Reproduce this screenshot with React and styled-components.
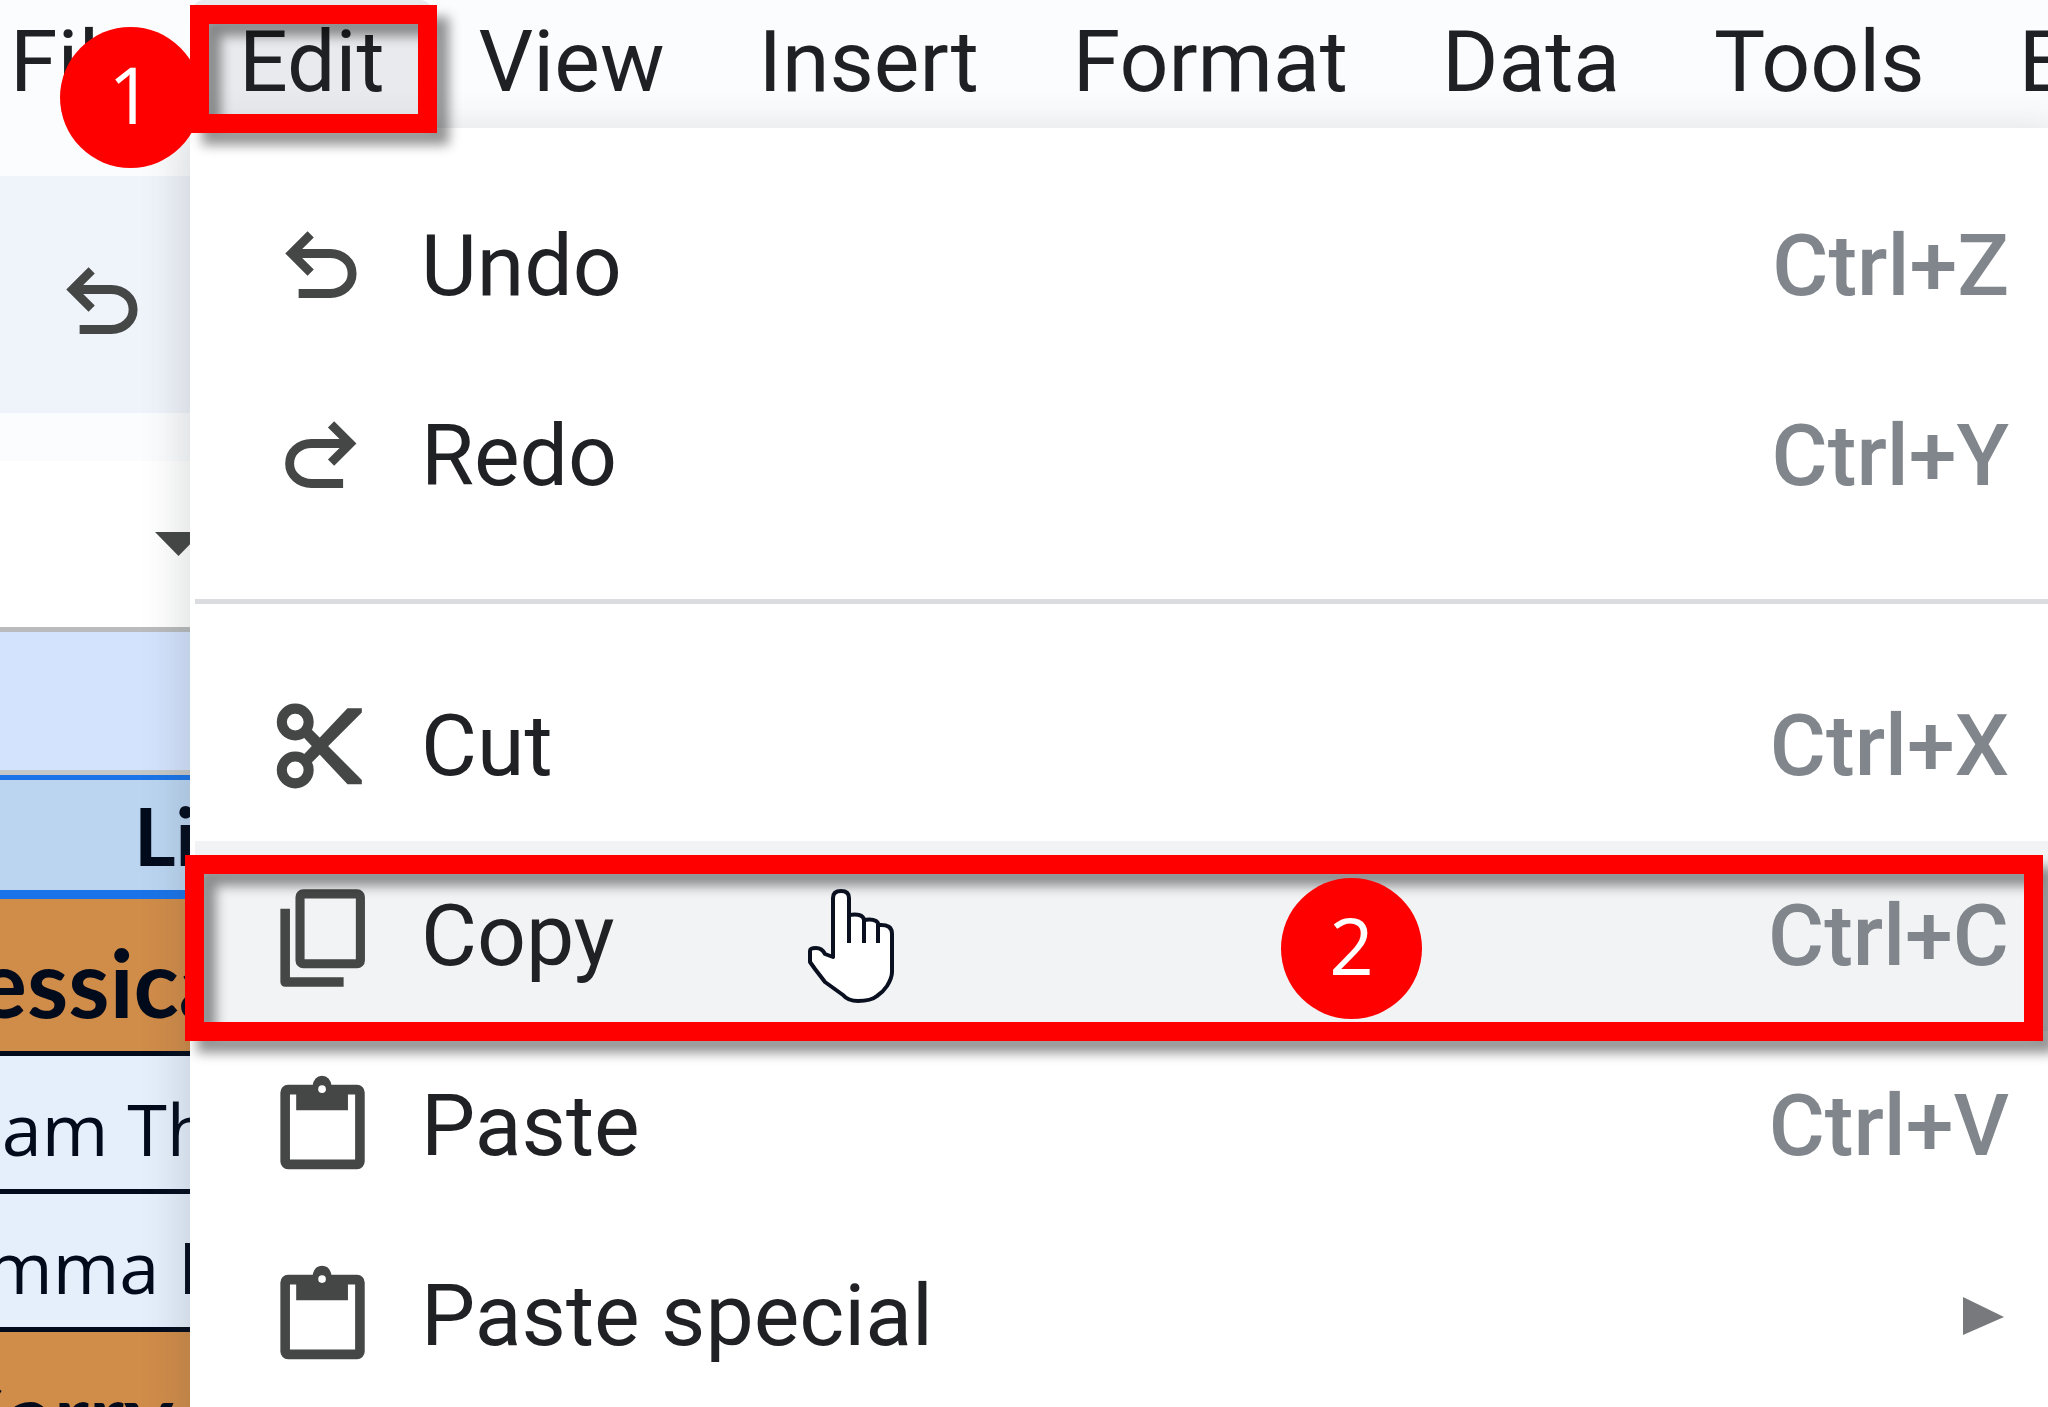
import React from 'react';
import styled, { createGlobalStyle, css } from 'styled-components';

const GlobalStyle = createGlobalStyle`
  *, *::before, *::after { box-sizing: border-box; }
  body { margin: 0; background: #fff; font-family: Roboto, "Liberation Sans", sans-serif; }
  button { font: inherit; color: inherit; background: none; border: 0; padding: 0; margin: 0; text-align: left; cursor: pointer; }
`;

const Page = styled.div`
  position: relative;
  height: 100vh;
  overflow: hidden;
  background: #fff;
`;

const MenuBar = styled.nav`
  display: flex;
  align-items: flex-start;
  height: 176px;
  margin-left: -37px;
`;

const MenuBarButton = styled.button`
  flex: none;
  height: 123px;
  padding: 0 47px;
  border-radius: 12px;
  font-size: 86px;
  line-height: 123px;
  white-space: nowrap;
  color: #1f2023;
  ${(p) => p.$open && css`background: #e8eaed;`}
`;

const Header = styled.header`
  background: #fafcfe;
`;

const Toolbar = styled.div`
  display: flex;
  align-items: center;
  height: 237px;
  padding: 16px 0 0 47px;
  background: #eff3fa;
`;

const ToolbarButton = styled.button`
  display: flex;
`;

const Gap = styled.div`
  height: 48px;
`;

const NameBox = styled.div`
  display: flex;
  align-items: center;
  height: 171px;
  padding-left: 155px;
  background: #fff;
  border-bottom: 5px solid #b9bbbd;
`;

const NameBoxButton = styled.button`
  display: flex;
`;

const ColumnHeader = styled.div`
  height: 143px;
  background: #d3e3fd;
  border-bottom: 5px solid #c4c7c9;
`;

const Sheet = styled.table`
  width: 100%;
  margin-left: -64px;
  border-collapse: separate;
  border-spacing: 0;
  table-layout: fixed;
  color: #020b1c;
`;

const HeadCell = styled.th`
  height: 124px;
  padding: 0 0 0 198px;
  border-top: 5px solid #1a73e8;
  border-bottom: 9px solid #1a73e8;
  background: #bbd5f1;
  font-family: Lato, sans-serif;
  font-size: 80px;
  line-height: 96px;
  font-weight: 700;
  text-align: left;
`;

const groupCell = css`
  height: 157px;
  padding: 14px 0 0 2px;
  background: #d08c49;
  font-family: Lato, sans-serif;
  font-size: 94px;
  line-height: 112px;
  font-weight: 700;
`;

const nameCell = css`
  height: 138px;
  padding: 10px 0 0 10px;
  background: #e5effc;
  font-family: "Open Sans", sans-serif;
  font-size: 72px;
  line-height: 92px;
`;

const Cell = styled.td`
  white-space: nowrap;
  border-bottom: 5px solid #020b1c;
  ${(p) => (p.$group ? groupCell : nameCell)}
`;

const Menu = styled.ul`
  position: absolute;
  top: 128px;
  left: 190px;
  right: 0;
  bottom: 0;
  margin: 0;
  padding: 43px 0 0 5px;
  list-style: none;
  background: #fff;
  box-shadow: 0 12px 36px 12px rgba(60, 64, 67, 0.15);
`;

const MenuRow = styled.li`
  position: relative;
  background: ${(p) => (p.$active ? '#f1f3f4' : 'transparent')};
`;

const MenuItem = styled.button`
  display: flex;
  align-items: center;
  width: 100%;
  height: 190px;
  padding: 0 39px 0 71px;
  font-size: 86px;
  line-height: 100px;
  color: #202124;
`;

const Label = styled.span`
  flex: 1;
  margin-left: 40px;
  white-space: nowrap;
`;

const Shortcut = styled.span`
  font-weight: 500;
  color: #80868b;
`;

const Separator = styled.li`
  height: 5px;
  margin: 48px 0 47px;
  background: #dadce0;
`;

const Frame = styled.div`
  position: absolute;
  border: 19px solid #ff0000;
  filter: drop-shadow(12px 12px 6px rgba(0, 0, 0, 0.42));
  pointer-events: none;
`;

const EditFrame = styled(Frame)`
  top: 5px;
  left: 190px;
  width: 247px;
  height: 128px;
`;

const CopyFrame = styled(Frame)`
  top: 14px;
  left: -10px;
  right: 5px;
  height: 186px;
`;

const Badge = styled.span`
  position: absolute;
  width: 141px;
  height: 141px;
  border-radius: 50%;
  background: #ff0000;
  color: #fff;
  font-family: "Open Sans", sans-serif;
  font-size: 78px;
  line-height: 134px;
  text-align: center;
  pointer-events: none;
`;

const EditBadge = styled(Badge)`
  top: 27px;
  left: 60px;
`;

const CopyBadge = styled(Badge)`
  top: 37px;
  right: 626px;
`;

const Pointer = styled.svg`
  position: absolute;
  top: 48px;
  left: 612px;
  pointer-events: none;
`;

const Icon = ({ children }) => (
  <svg width="115" height="115" viewBox="0 0 24 24" fill="#444746" aria-hidden="true">
    {children}
  </svg>
);

const undoPath =
  'M7 19v-2h7.1q1.575 0 2.737-1T18 13.5 16.838 11 14.1 10H7.8l2.6 2.6L9 14 4 9l5-5 1.4 1.4L7.8 8h6.3q2.425 0 4.163 1.575T20 13.5t-1.738 3.925T14.1 19z';

const UndoIcon = () => (
  <Icon><path d={undoPath} transform="translate(0.3 0.9) scale(0.93)" /></Icon>
);

const RedoIcon = () => (
  <Icon><path d={undoPath} transform="translate(22.6 0.9) scale(-0.93 0.93)" /></Icon>
);

const CutIcon = () => (
  <Icon>
    <g fill="none" stroke="#444746" strokeWidth="2.1">
      <circle cx="6.1" cy="6.9" r="2.8" />
      <circle cx="6.1" cy="16.9" r="2.8" />
    </g>
    <path d="M7.2 9.4 8.8 7.7 20 19v.9h-3z" />
    <path d="M7.2 14.4 8.8 16.1 20 4.9V4h-3z" />
  </Icon>
);

const CopyIcon = () => (
  <Icon>
    <rect x="7.1" y="3.1" width="12.6" height="14.6" rx="0.7" fill="none" stroke="#444746" strokeWidth="1.9" />
    <path d="M3 6.2h2v14.3h11.2v2H4a1 1 0 0 1-1-1z" />
  </Icon>
);

const PasteIcon = () => (
  <Icon>
    <rect x="4" y="4.3" width="15.6" height="15.6" rx="0.6" fill="none" stroke="#444746" strokeWidth="2" />
    <path d="M6.3 3.6h3.4q.3-2.2 2-2.2t2 2.2h3.4v5H6.300z" />
    <circle cx="11.7" cy="4.2" r="0.8" fill="#fff" />
  </Icon>
);

const DropArrow = () => (
  <svg width="47" height="24" viewBox="0 0 47 24" fill="#444746" aria-hidden="true">
    <path d="M0 0h47L23.500 24z" />
  </svg>
);

const SubmenuArrow = () => (
  <svg width="46" height="38" viewBox="0 0 46 38" fill="#77797c" aria-hidden="true">
    <path d="M0 0 41 20 0 38z" />
  </svg>
);

const HandPointer = () => (
  <Pointer width="87" height="116" viewBox="0 0 87 116" aria-hidden="true">
    <path
      d="M26 68V9q0-7 8-7t8 7v17q14-2 15 5 13-2 15 5 13-1 13 9v38q0 6-5 14-4 6-10 10-6 5-19 5-10 0-15-6L18 93 8 80 3 73V62q0-3 6-3 6 0 9 6z"
      fill="#fff"
      stroke="#0a1020"
      strokeWidth="4"
      strokeLinejoin="round"
    />
    <path d="M42 24v30M57 31v23M71 35v19" fill="none" stroke="#0a1020" strokeWidth="4" />
  </Pointer>
);

const menus = ['File', 'Edit', 'View', 'Insert', 'Format', 'Data', 'Tools', 'Extensions'];

const rows = [
  { text: 'Jessica', group: true },
  { text: 'Liam Th' },
  { text: 'Emma L' },
  { text: 'Garry', group: true },
];

function Item({ icon, label, keys, submenu, active, children }) {
  return (
    <MenuRow $active={active} role="none">
      <MenuItem role="menuitem">
        {icon}
        <Label>{label}</Label>
        {keys && <Shortcut>{keys}</Shortcut>}
        {submenu && <SubmenuArrow />}
      </MenuItem>
      {children}
    </MenuRow>
  );
}

export default function App() {
  return (
    <Page>
      <GlobalStyle />
      <Header>
        <MenuBar aria-label="Main menu">
          {menus.map((name) => (
            <MenuBarButton key={name} $open={name === 'Edit'}>{name}</MenuBarButton>
          ))}
        </MenuBar>
        <Toolbar role="toolbar">
          <ToolbarButton aria-label="Undo"><UndoIcon /></ToolbarButton>
        </Toolbar>
        <Gap />
        <NameBox>
          <NameBoxButton aria-label="Named ranges"><DropArrow /></NameBoxButton>
        </NameBox>
      </Header>
      <ColumnHeader />
      <Sheet>
        <thead>
          <tr><HeadCell scope="col">List</HeadCell></tr>
        </thead>
        <tbody>
          {rows.map((row) => (
            <tr key={row.text}><Cell $group={row.group}>{row.text}</Cell></tr>
          ))}
        </tbody>
      </Sheet>

      <Menu role="menu" aria-label="Edit">
        <Item icon={<UndoIcon />} label="Undo" keys="Ctrl+Z" />
        <Item icon={<RedoIcon />} label="Redo" keys="Ctrl+Y" />
        <Separator role="separator" />
        <Item icon={<CutIcon />} label="Cut" keys="Ctrl+X" />
        <Item icon={<CopyIcon />} label="Copy" keys="Ctrl+C" active>
          <CopyFrame />
          <HandPointer />
          <CopyBadge>2</CopyBadge>
        </Item>
        <Item icon={<PasteIcon />} label="Paste" keys="Ctrl+V" />
        <Item icon={<PasteIcon />} label="Paste special" submenu />
      </Menu>

      <EditFrame />
      <EditBadge>1</EditBadge>
    </Page>
  );
}
